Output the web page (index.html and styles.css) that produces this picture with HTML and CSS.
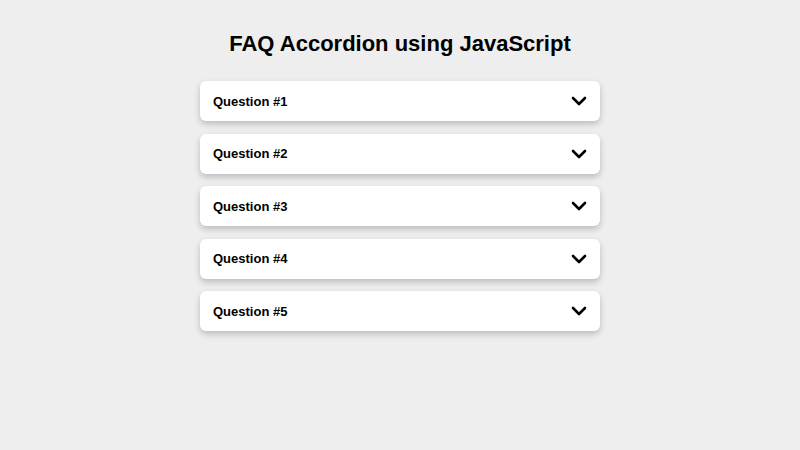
FILE: index.html
```html
<!DOCTYPE html>
<html>
<head>
<meta charset="utf-8">
<link rel="stylesheet" href="styles.css">
</head>
<body>
<main class="wrap">
  <h1 class="title">FAQ Accordion using JavaScript</h1>
  <div class="faq">
    <div class="item"><span class="q">Question #1</span><svg class="chev" viewBox="0 0 16 10" width="16" height="10"><path d="M2 2 L8 8 L14 2" fill="none" stroke="#000" stroke-width="2.6" stroke-linecap="round" stroke-linejoin="round"/></svg></div>
    <div class="item"><span class="q">Question #2</span><svg class="chev" viewBox="0 0 16 10" width="16" height="10"><path d="M2 2 L8 8 L14 2" fill="none" stroke="#000" stroke-width="2.6" stroke-linecap="round" stroke-linejoin="round"/></svg></div>
    <div class="item"><span class="q">Question #3</span><svg class="chev" viewBox="0 0 16 10" width="16" height="10"><path d="M2 2 L8 8 L14 2" fill="none" stroke="#000" stroke-width="2.6" stroke-linecap="round" stroke-linejoin="round"/></svg></div>
    <div class="item"><span class="q">Question #4</span><svg class="chev" viewBox="0 0 16 10" width="16" height="10"><path d="M2 2 L8 8 L14 2" fill="none" stroke="#000" stroke-width="2.6" stroke-linecap="round" stroke-linejoin="round"/></svg></div>
    <div class="item"><span class="q">Question #5</span><svg class="chev" viewBox="0 0 16 10" width="16" height="10"><path d="M2 2 L8 8 L14 2" fill="none" stroke="#000" stroke-width="2.6" stroke-linecap="round" stroke-linejoin="round"/></svg></div>
  </div>
</main>
</body>
</html>
```
FILE: styles.css
```css
html, body {
  margin: 0;
  padding: 0;
  background: #eeeeee;
  font-family: "Liberation Sans", Arial, sans-serif;
  color: #000;
}
.wrap {
  display: flex;
  flex-direction: column;
  align-items: center;
  padding: 31px 0 40px;
}
.title {
  margin: 0;
  font-size: 22px;
  font-weight: bold;
  line-height: 26px;
  color: #000;
}
.faq {
  width: 400px;
  margin-top: 24px;
  display: flex;
  flex-direction: column;
  gap: 12.5px;
}
.item {
  height: 40px;
  background: #fff;
  border-radius: 6px;
  box-shadow: 0 3px 6px rgba(0,0,0,0.22);
  display: flex;
  align-items: center;
  justify-content: space-between;
  padding: 0 13px 0 13px;
}
.q {
  font-size: 13px;
  font-weight: bold;
}
.chev {
  display: block;
}
```
